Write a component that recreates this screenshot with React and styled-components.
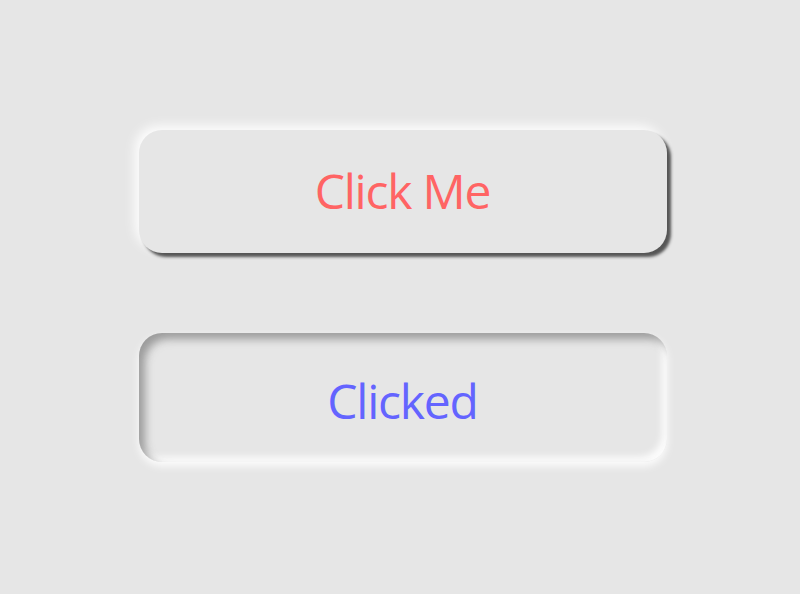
import React, {useState} from 'react';
import styled, {createGlobalStyle, css} from 'styled-components';

const GlobalStyle = createGlobalStyle`
  html, body {
    margin:0;
    padding:0;
    background:#e6e6e6;
  }
`

function App() {
  const [clicked, setClicked] = useState(false);

  return (
    <Page>
      <GlobalStyle/>
      <Button onClick={() => setClicked(!clicked)}>Click Me</Button>
      <Button pressed onClick={() => setClicked(!clicked)}>Clicked</Button>
    </Page>
  );
}

const Page = styled.div`
  width:100%;
  height:100vh;
  box-sizing:border-box;
  padding:0 0 3px 5px;
  display:flex;
  flex-direction:column;
  align-items:center;
  justify-content:center;
  gap:80px;
  background:#e6e6e6;
`

const raised = css`
  height:123px;
  padding:0 0 1px;
  color:#ff6464;
  box-shadow:
    4px 4px 3px rgba(70,70,70,0.9),
    -4px -4px 12px rgba(255,255,255,0.95);
`

const sunken = css`
  height:129px;
  padding:8px 0 0;
  color:#6464ff;
  box-shadow:
    inset 6px 6px 8px rgba(95,95,95,0.55),
    inset -5px -5px 7px rgba(255,255,255,0.9),
    0 4px 9px rgba(255,255,255,0.9);
`

const Button = styled.button.withConfig({shouldForwardProp: p => p !== 'pressed'})`
  width:528px;
  border:none;
  outline:none;
  border-radius:23px;
  background:#e6e6e6;
  font-family:"Open Sans", sans-serif;
  font-size:48px;
  line-height:1;
  letter-spacing:-1.2px;
  cursor:pointer;
  ${p => p.pressed ? sunken : raised}
`

export default App;
